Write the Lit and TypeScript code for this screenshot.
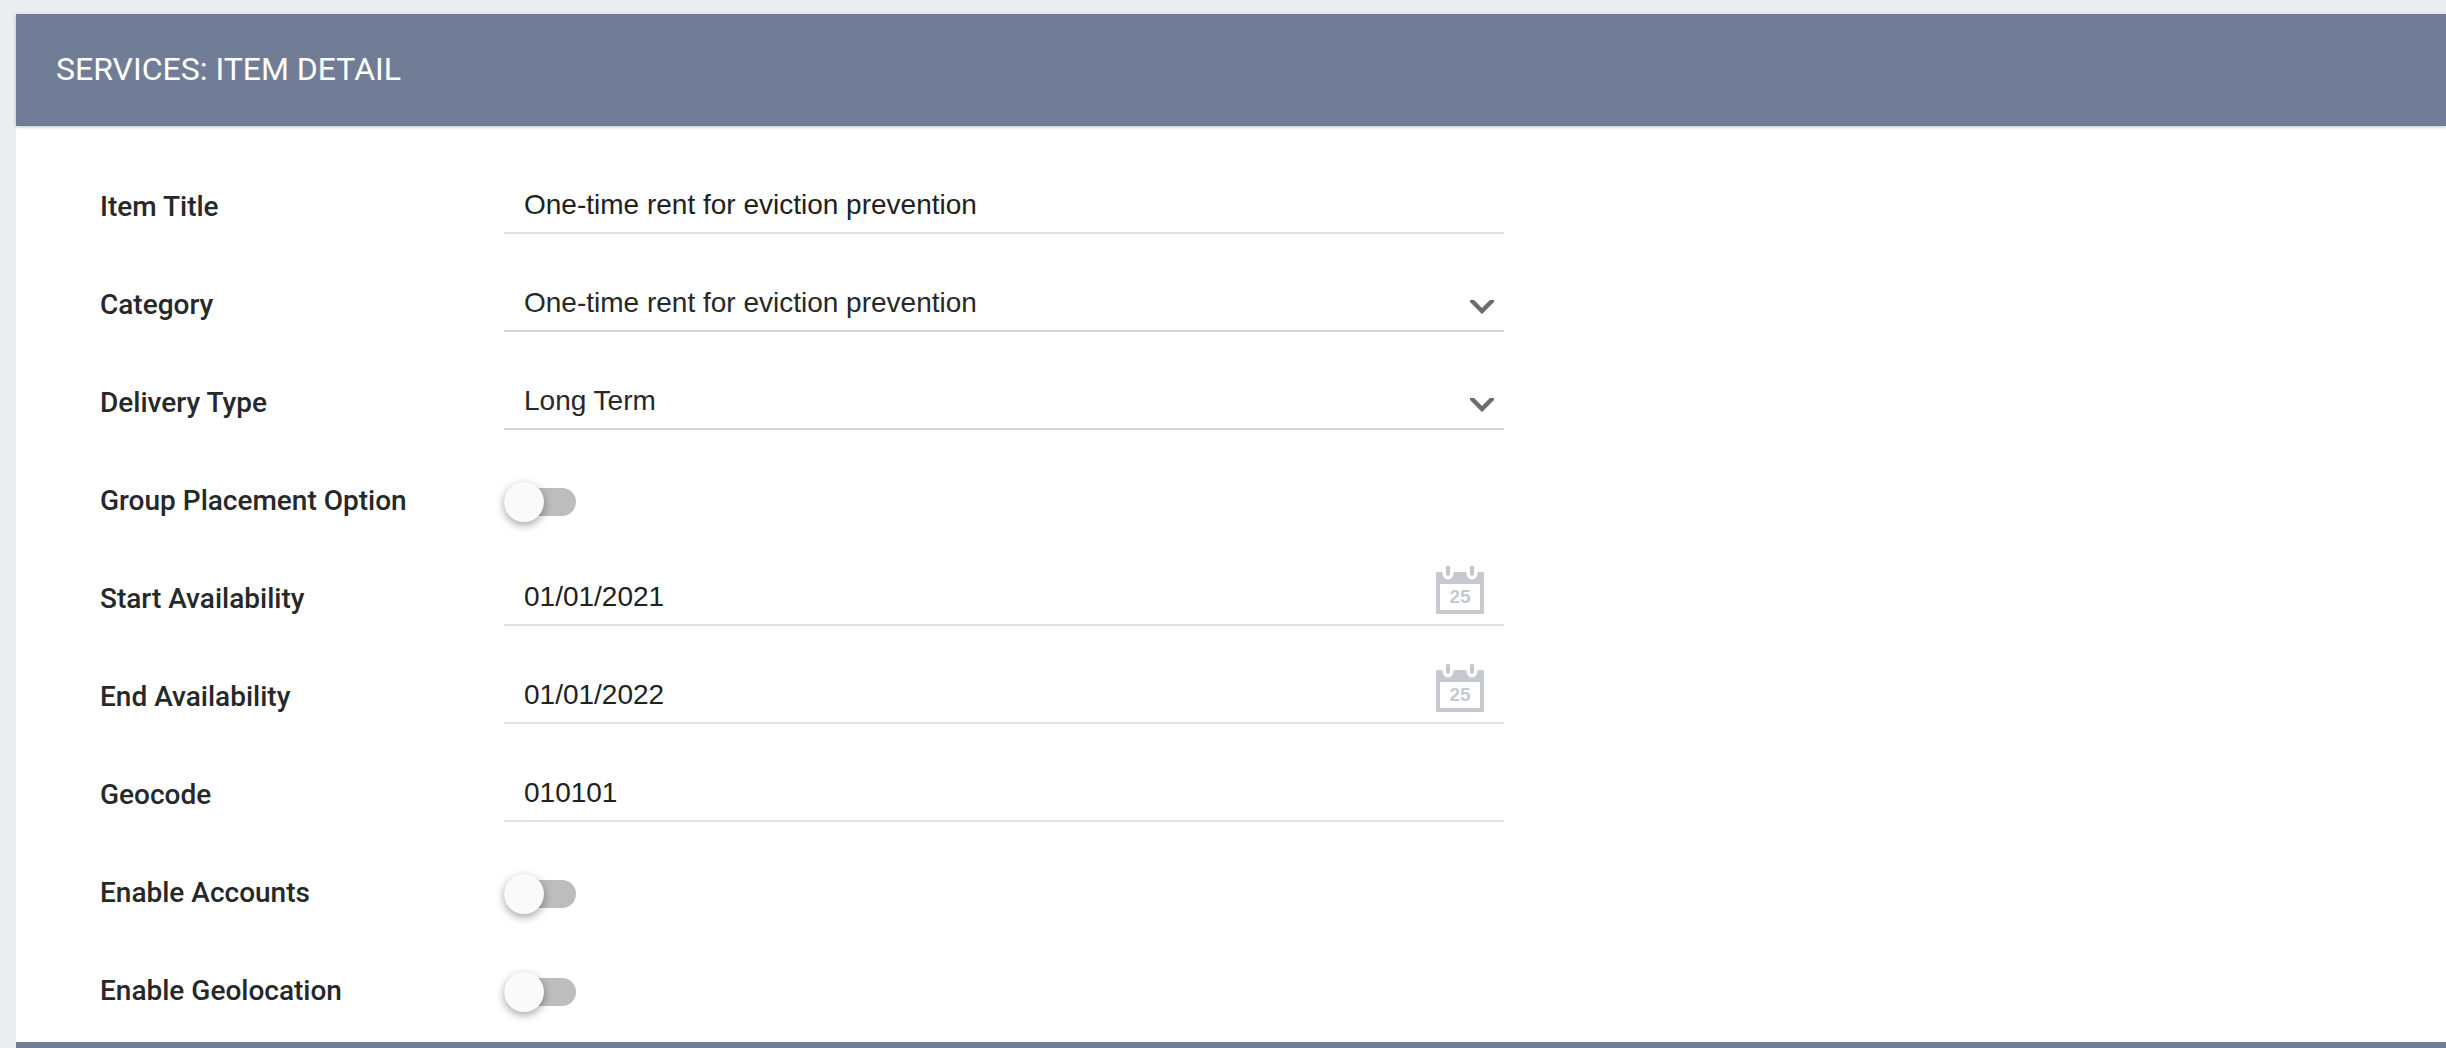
import { LitElement, html, css, nothing } from "lit";
import { customElement, property, state } from "lit/decorators.js";

type FieldKind = "text" | "select" | "date" | "toggle";

interface Field {
  id: string;
  label: string;
  kind: FieldKind;
  value?: string;
}

const FIELDS: Field[] = [
  { id: "item-title", label: "Item Title", kind: "text", value: "One-time rent for eviction prevention" },
  { id: "category", label: "Category", kind: "select", value: "One-time rent for eviction prevention" },
  { id: "delivery-type", label: "Delivery Type", kind: "select", value: "Long Term" },
  { id: "group-placement", label: "Group Placement Option", kind: "toggle" },
  { id: "start-availability", label: "Start Availability", kind: "date", value: "01/01/2021" },
  { id: "end-availability", label: "End Availability", kind: "date", value: "01/01/2022" },
  { id: "geocode", label: "Geocode", kind: "text", value: "010101" },
  { id: "enable-accounts", label: "Enable Accounts", kind: "toggle" },
  { id: "enable-geolocation", label: "Enable Geolocation", kind: "toggle" },
];

@customElement("form-row")
class FormRow extends LitElement {
  @property({ attribute: false }) field!: Field;

  static styles = css`
    :host {
      display: block;
    }
    .row {
      display: grid;
      grid-template-columns: 404px minmax(0, 1000px);
      align-items: end;
      height: 98px;
    }
    .label {
      padding-bottom: 11px;
      font: 500 28px/32px Roboto, "Liberation Sans", sans-serif;
      color: #262829;
    }
    .field {
      display: grid;
      align-items: end;
    }
    .field > * {
      grid-area: 1 / 1;
    }
    .control {
      appearance: none;
      box-sizing: border-box;
      width: 100%;
      height: 60px;
      margin: 0;
      padding: 15px 20px 11px;
      border: 0;
      border-bottom: 2px solid #e0e0e0;
      border-radius: 0;
      outline: 0;
      background: transparent;
      color: #212121;
      font: 400 28px/32px "Liberation Sans", Arial, sans-serif;
    }
    .select {
      border-bottom-color: #d3d3da;
      color: #262829;
    }
    .chevron {
      justify-self: end;
      width: 24px;
      height: 14px;
      margin: 0 10px 18px 0;
      pointer-events: none;
    }
    .picker {
      justify-self: end;
      display: block;
      width: 48px;
      height: 48px;
      margin: 0 20px 12px 0;
      padding: 0;
      border: 0;
      background: none;
      cursor: pointer;
    }
    .calendar {
      display: block;
    }
    .digits {
      font: 700 19px "Liberation Sans", Arial, sans-serif;
      fill: #c6c9d0;
    }
    .toggle {
      appearance: none;
      display: grid;
      align-items: center;
      width: 72px;
      height: 40px;
      margin: 0 0 6px;
      cursor: pointer;
    }
    .toggle::before,
    .toggle::after {
      content: "";
      grid-area: 1 / 1;
    }
    .toggle::before {
      height: 28px;
      border-radius: 16px;
      background: #bdbdbd;
    }
    .toggle::after {
      width: 40px;
      height: 40px;
      border-radius: 50%;
      background: #fafafa;
      box-shadow: 0 3px 8px rgba(0, 0, 0, 0.36);
    }
    .toggle:checked::before {
      background: #aab2c4;
    }
    .toggle:checked::after {
      justify-self: end;
      background: #717d96;
    }
  `;

  private renderControl() {
    const { id, kind, value = "" } = this.field;
    if (kind === "toggle") {
      return html`<input class="toggle" type="checkbox" role="switch" id=${id} />`;
    }
    if (kind === "select") {
      return html`
        <select class="control select" id=${id}>
          <option selected>${value}</option>
        </select>
        <svg class="chevron" viewBox="0 0 24 14" aria-hidden="true">
          <path d="M0 -1 L12 11 L24 -1" fill="none" stroke="#696d71" stroke-width="4.4" />
        </svg>
      `;
    }
    return html`
      <input class="control" type="text" id=${id} .value=${value} />
      ${kind === "date"
        ? html`<button class="picker" type="button" aria-label="Open calendar">
            <svg class="calendar" width="48" height="48" viewBox="0 0 48 48" aria-hidden="true">
              <path
                fill="#c6c9d0"
                fill-rule="evenodd"
                d="M1.5 6 H6.5 V7 A5.5 6.5 0 0 0 17.5 7 V6 H30.5 V7 A5.5 6.5 0 0 0 41.5 7 V6 H46.5 Q48 6 48 7.5 V46.5 Q48 48 46.5 48 H1.5 Q0 48 0 46.5 V7.5 Q0 6 1.5 6 Z M4 18 V44 H44 V18 Z"
              />
              <rect x="10" y="-3" width="4" height="13" rx="2" fill="#c6c9d0" />
              <rect x="34" y="-3" width="4" height="13" rx="2" fill="#c6c9d0" />
              <text class="digits" x="24" y="37" text-anchor="middle">25</text>
            </svg>
          </button>`
        : nothing}
    `;
  }

  render() {
    return html`
      <div class="row">
        <label class="label" for=${this.field.id}>${this.field.label}</label>
        <div class="field">${this.renderControl()}</div>
      </div>
    `;
  }
}

@customElement("app-root")
class AppRoot extends LitElement {
  @state() private fields = FIELDS;

  static styles = css`
    :host {
      display: block;
      background: #ecedf1;
    }
    .page {
      display: flex;
      flex-direction: column;
      box-sizing: border-box;
      min-height: 100vh;
      padding: 14px 0 0 16px;
    }
    .header {
      z-index: 1;
      padding: 35px 40px 37px;
      background: #717d96;
      box-shadow: 0 1px 3px rgba(0, 0, 0, 0.25);
    }
    .title {
      margin: 0;
      font: 400 32px/40px Roboto, "Liberation Sans", sans-serif;
      color: #fff;
    }
    .form {
      padding: 10px 84px 24px;
      background: #fff;
    }
    .next {
      flex: 1;
      min-height: 6px;
      background: #717d96;
    }
  `;

  render() {
    return html`
      <main class="page">
        <header class="header"><h1 class="title">SERVICES: ITEM DETAIL</h1></header>
        <form class="form">
          ${this.fields.map((field) => html`<form-row .field=${field}></form-row>`)}
        </form>
        <div class="next"></div>
      </main>
    `;
  }
}
